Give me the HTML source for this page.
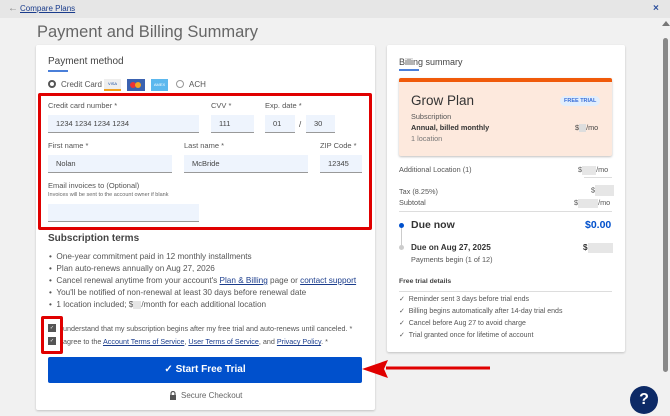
<!DOCTYPE html>
<html><head><meta charset="utf-8"><style>
*{box-sizing:border-box;margin:0;padding:0}
body{width:670px;height:416px;overflow:hidden;background:#f1f1f1;font-family:"Liberation Sans",sans-serif;color:#444;position:relative;font-size:8px}
.a{position:absolute;white-space:nowrap}
.card{position:absolute;background:#fff;box-shadow:0 1px 2px rgba(0,0,0,.2);border-radius:2px}
.inp{position:absolute;background:#eef4fd;border-bottom:1px solid #999;font-size:7.5px;color:#444;padding-left:8px;line-height:18px;height:18px}
.lbl{position:absolute;font-size:7.5px;color:#555}
a{color:#1a3c8c;text-decoration:underline}
.blur{display:inline-block;background:#e6e6e6;vertical-align:middle}
</style></head><body>
<div class="a" style="left:0;top:0;width:670px;height:18px;background:#e6e6e6"></div>
<div class="a" style="left:8px;top:3px;font-size:10px;color:#888">←</div>
<div class="a" style="left:20px;top:4px;font-size:8px"><a>Compare Plans</a></div>
<div class="a" style="left:653px;top:3px;font-size:10px;color:#2c4f9c;font-weight:bold">×</div>
<div class="a" style="left:37px;top:23px;font-size:16.5px;color:#666">Payment and Billing Summary</div>
<div class="a" style="left:662px;top:21px;width:0;height:0;border-left:4px solid transparent;border-right:4px solid transparent;border-bottom:5px solid #777"></div>
<div class="a" style="left:663px;top:38px;width:5px;height:334px;background:#888;border-radius:3px"></div>

<div class="card" style="left:36px;top:45px;width:339px;height:365px"></div>
<div class="a" style="left:48px;top:56px;font-size:10px;color:#444">Payment method</div>
<div class="a" style="left:48px;top:70px;width:20px;height:1.5px;background:#4a7fd9"></div>
<div class="a" style="left:48px;top:80px;width:8px;height:8px;border-radius:50%;border:2.5px solid #555"></div>
<div class="a" style="left:61px;top:80px;font-size:8px;color:#555">Credit Card</div>
<div class="a" style="left:104px;top:79px;width:17px;height:12px;background:#eee;border-bottom:2px solid #f0a020;font-size:4px;color:#1a4fa0;text-align:center;line-height:10px">VISA</div>
<div class="a" style="left:127px;top:79px;width:18px;height:12px;background:#3b62b0"><div class="a" style="left:3px;top:3px;width:6px;height:6px;border-radius:50%;background:#e33"></div><div class="a" style="left:8px;top:3px;width:6px;height:6px;border-radius:50%;background:#f5a623"></div></div>
<div class="a" style="left:151px;top:79px;width:17px;height:12px;background:#5cb8ee;font-size:4px;color:#fff;text-align:center;line-height:12px">AMEX</div>
<div class="a" style="left:176px;top:80px;width:8px;height:8px;border-radius:50%;border:1px solid #999"></div>
<div class="a" style="left:189px;top:80px;font-size:8px;color:#555">ACH</div>

<div class="a" style="left:38px;top:93px;width:334px;height:137px;border:3px solid #e00000;border-radius:2px"></div>
<div class="lbl" style="left:48px;top:101px">Credit card number *</div>
<div class="lbl" style="left:211px;top:101px">CVV *</div>
<div class="lbl" style="left:265px;top:101px">Exp. date *</div>
<div class="inp" style="left:48px;top:115px;width:151px">1234 1234 1234 1234</div>
<div class="inp" style="left:211px;top:115px;width:43px">111</div>
<div class="inp" style="left:265px;top:115px;width:30px">01</div>
<div class="a" style="left:299px;top:120px;font-size:8px">/</div>
<div class="inp" style="left:306px;top:115px;width:29px">30</div>
<div class="lbl" style="left:48px;top:141px">First name *</div>
<div class="lbl" style="left:184px;top:141px">Last name *</div>
<div class="lbl" style="left:320px;top:141px">ZIP Code *</div>
<div class="inp" style="left:48px;top:155px;width:124px">Nolan</div>
<div class="inp" style="left:184px;top:155px;width:124px">McBride</div>
<div class="inp" style="left:320px;top:155px;width:42px">12345</div>
<div class="lbl" style="left:48px;top:181px">Email invoices to (Optional)</div>
<div class="a" style="left:48px;top:192px;font-size:5.5px;color:#666">Invoices will be sent to the account owner if blank</div>
<div class="inp" style="left:48px;top:204px;width:151px"></div>

<div class="a" style="left:48px;top:233px;font-size:10px;font-weight:bold;color:#444">Subscription terms</div>
<div class="a" style="left:49px;top:251px;font-size:8.2px;color:#555;line-height:12px;white-space:nowrap">
• &nbsp;One-year commitment paid in 12 monthly installments<br>
• &nbsp;Plan auto-renews annually on Aug 27, 2026<br>
• &nbsp;Cancel renewal anytime from your account's <a>Plan &amp; Billing</a> page or <a>contact support</a><br>
• &nbsp;You'll be notified of non-renewal at least 30 days before renewal date<br>
• &nbsp;1 location included; $<span class="blur" style="width:8px;height:8px"></span>/month for each additional location</div>
<div class="a" style="left:41px;top:316px;width:22px;height:38px;border:3px solid #e00000;border-radius:2px"></div>
<div class="a" style="left:48px;top:324px;width:8px;height:8px;background:#555;color:#fff;font-size:5px;text-align:center;line-height:8px">✓</div>
<div class="a" style="left:48px;top:337px;width:8px;height:8px;background:#555;color:#fff;font-size:5px;text-align:center;line-height:8px">✓</div>
<div class="a" style="left:63px;top:324px;font-size:7.2px;color:#555">understand that my subscription begins after my free trial and auto-renews until canceled. *</div>
<div class="a" style="left:63px;top:337px;font-size:7.2px;color:#555">agree to the <a>Account Terms of Service</a>, <a>User Terms of Service</a>, and <a>Privacy Policy</a>. *</div>
<div class="a" style="left:48px;top:357px;width:314px;height:26px;background:#0050cc;border-radius:2px;color:#fff;font-size:10px;font-weight:bold;text-align:center;line-height:26px">✓ Start Free Trial</div>
<svg class="a" style="left:169px;top:391px" width="8" height="9"><path d="M2 4 V2.5 a2 2 0 0 1 4 0 V4" stroke="#555" stroke-width="1.2" fill="none"/><rect x="1" y="4" width="6" height="5" fill="#555"/></svg>
<div class="a" style="left:181px;top:391px;font-size:8px;color:#666">Secure Checkout</div>
<svg class="a" style="left:358px;top:358px" width="135" height="22"><path d="M132 10 L28 10" stroke="#e00000" stroke-width="3"/><path d="M4 11 L30 2 L26 11 L30 20 Z" fill="#e00000"/></svg>

<div class="card" style="left:387px;top:45px;width:238px;height:307px"></div>
<div class="a" style="left:399px;top:57px;font-size:9px;color:#444">Billing summary</div>
<div class="a" style="left:399px;top:69px;width:20px;height:1.5px;background:#4a7fd9"></div>
<div class="a" style="left:399px;top:78px;width:213px;height:78px;background:#fde9dd;border-top:4px solid #f05a0a;border-radius:2px;box-shadow:0 1px 2px rgba(0,0,0,.25)"></div>
<div class="a" style="left:411px;top:93px;font-size:13.5px;color:#333">Grow Plan</div>
<div class="a" style="left:560px;top:96px;font-size:5.5px;font-weight:bold;color:#3a6fd8;background:#e2eefc;padding:2px 4px;border-radius:5px">FREE TRIAL</div>
<div class="a" style="left:411px;top:112px;font-size:7.3px;color:#555">Subscription</div>
<div class="a" style="left:411px;top:123px;font-size:7.3px;color:#333;font-weight:bold">Annual, billed monthly</div>
<div class="a" style="left:575px;top:123px;font-size:7.3px;color:#444">$<span class="blur" style="width:7px;height:8px;background:#ddd"></span>/mo</div>
<div class="a" style="left:411px;top:134px;font-size:7.3px;color:#777">1 location</div>
<div class="a" style="left:399px;top:165px;font-size:7.3px;color:#555">Additional Location (1)</div>
<div class="a" style="left:578px;top:165px;font-size:7.3px;color:#555">$<span class="blur" style="width:14px;height:9px"></span>/mo</div>
<div class="a" style="left:584px;top:177px;width:28px;height:1px;background:#ddd"></div>
<div class="a" style="left:399px;top:187px;font-size:7.3px;color:#555">Tax (8.25%)</div>
<div class="a" style="left:591px;top:185px;font-size:7.3px;color:#555">$<span class="blur" style="width:19px;height:11px"></span></div>
<div class="a" style="left:399px;top:198px;font-size:7.3px;color:#555">Subtotal</div>
<div class="a" style="left:574px;top:198px;font-size:7.3px;color:#555">$<span class="blur" style="width:20px;height:9px"></span>/mo</div>
<div class="a" style="left:399px;top:211px;width:213px;height:1px;background:#ddd"></div>
<div class="a" style="left:399px;top:223px;width:5px;height:5px;border-radius:50%;background:#0050cc"></div>
<div class="a" style="left:401px;top:228px;width:1px;height:18px;background:#ccc"></div>
<div class="a" style="left:399px;top:245px;width:5px;height:5px;border-radius:50%;background:#ccc"></div>
<div class="a" style="left:411px;top:219px;font-size:10.5px;color:#333;font-weight:bold">Due now</div>
<div class="a" style="left:585px;top:219px;font-size:10.5px;color:#0050cc;font-weight:bold">$0.00</div>
<div class="a" style="left:411px;top:243px;font-size:8.2px;color:#333;font-weight:bold">Due on Aug 27, 2025</div>
<div class="a" style="left:583px;top:243px;font-size:8.2px;color:#333;font-weight:bold">$<span class="blur" style="width:25px;height:10px"></span></div>
<div class="a" style="left:411px;top:255px;font-size:7.3px;color:#555">Payments begin (1 of 12)</div>
<div class="a" style="left:399px;top:278px;font-size:6.8px;color:#444;font-weight:bold">Free trial details</div>
<div class="a" style="left:399px;top:291px;width:213px;height:1px;background:#ddd"></div>
<div class="a" style="left:399px;top:294px;font-size:7px;color:#555;line-height:12px">✓ &nbsp;Reminder sent 3 days before trial ends<br>✓ &nbsp;Billing begins automatically after 14-day trial ends<br>✓ &nbsp;Cancel before Aug 27 to avoid charge<br>✓ &nbsp;Trial granted once for lifetime of account</div>

<div class="a" style="left:630px;top:386px;width:28px;height:28px;border-radius:50%;background:#0d2a66;color:#fff;font-size:16px;font-weight:bold;text-align:center;line-height:28px">?</div>
</body></html>
